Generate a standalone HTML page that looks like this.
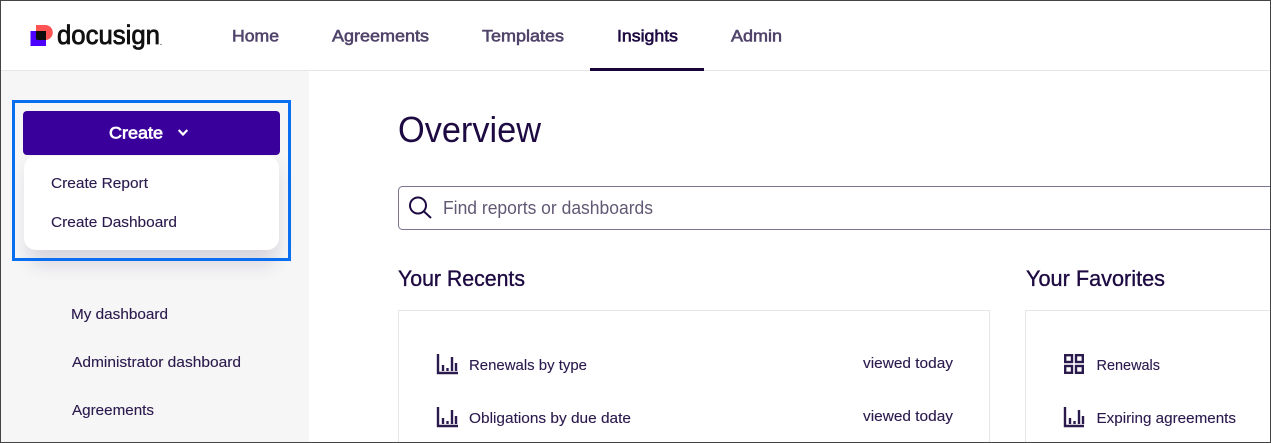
<!DOCTYPE html>
<html><head><meta charset="utf-8"><style>
html,body{margin:0;padding:0;background:#fff;overflow:hidden}
#p{position:relative;width:1271px;height:443px;overflow:hidden;background:#fff}
svg{position:absolute;left:0;top:0;display:block}
text{font-family:"Liberation Sans",sans-serif}
.n{font-size:17px;fill:#51446b;stroke:#51446b;stroke-width:.6}
.b{font-size:15px;fill:#2b1a4d;stroke:#2b1a4d;stroke-width:.12}
.h{font-size:22px;fill:#1e0a42;stroke:#1e0a42;stroke-width:.35}
</style></head><body><div id="p">
<svg width="1271" height="443" viewBox="0 0 1271 443" xmlns="http://www.w3.org/2000/svg">
<defs><filter id="s" x="-20%" y="-30%" width="140%" height="170%"><feGaussianBlur stdDeviation="9"/></filter></defs>
<rect x="1" y="71" width="308" height="372" fill="#f6f6f6"/>
<rect x="1" y="70" width="1270" height="1" fill="#e6e6e6"/>
<path d="M36 25H44.500A7.500 7.500 0 0 1 46 40V31H36Z" fill="#ff5252"/>
<rect x="30.500" y="31" width="15.500" height="15" fill="#4c00ff"/>
<path d="M36 31H46V40H38A2 2 0 0 1 36 38Z" fill="#0c0c0c"/>
<text x="57" y="44" font-size="27" textLength="103" lengthAdjust="spacingAndGlyphs" fill="#111" stroke="#111" stroke-width=".8">docusign</text>
<rect x="160" y="44" width="2" height="1" fill="#999"/>
<text class="n" x="232" y="41.500" textLength="47" lengthAdjust="spacingAndGlyphs">Home</text>
<text class="n" x="332" y="41.500" textLength="97" lengthAdjust="spacingAndGlyphs">Agreements</text>
<text class="n" x="482" y="41.500" textLength="82" lengthAdjust="spacingAndGlyphs">Templates</text>
<text class="n" x="617" y="41.500" textLength="61" lengthAdjust="spacingAndGlyphs" style="fill:#1e0a42;stroke:#1e0a42">Insights</text>
<text class="n" x="731" y="41.500" textLength="51" lengthAdjust="spacingAndGlyphs">Admin</text>
<rect x="590" y="68" width="114" height="3" fill="#170438"/>
<rect x="28" y="165" width="250" height="100" rx="12" fill="#1e0a42" opacity=".13" filter="url(#s)"/>
<rect x="13.500" y="101.500" width="276" height="158" fill="none" stroke="#0a6ef0" stroke-width="3"/>
<rect x="23" y="111" width="257" height="44" rx="4" fill="#3a009b"/>
<text x="109" y="138.500" font-size="17" fill="#fff" stroke="#fff" stroke-width=".7" textLength="54" lengthAdjust="spacingAndGlyphs">Create</text>
<path d="M178.700 130L183 134.500L187.300 130" fill="none" stroke="#fff" stroke-width="2.200"/>
<rect x="24" y="156" width="255" height="94" rx="12" fill="#fff"/>
<text class="b" x="51" y="188" textLength="97" lengthAdjust="spacingAndGlyphs">Create Report</text>
<text class="b" x="51" y="227" textLength="126" lengthAdjust="spacingAndGlyphs">Create Dashboard</text>
<text class="b" x="71" y="319" textLength="97" lengthAdjust="spacingAndGlyphs">My dashboard</text>
<text class="b" x="72" y="367" textLength="169" lengthAdjust="spacingAndGlyphs">Administrator dashboard</text>
<text class="b" x="72" y="415" textLength="82" lengthAdjust="spacingAndGlyphs">Agreements</text>
<text x="398" y="142" font-size="36" textLength="143" lengthAdjust="spacingAndGlyphs" fill="#1e0a42">Overview</text>
<path d="M1270 186.500H402.500A4 4 0 0 0 398.500 190.500V225.500A4 4 0 0 0 402.500 229.500H1270" fill="none" stroke="#7d7290"/>
<circle cx="418" cy="205.500" r="8" fill="none" stroke="#1e0a42" stroke-width="2"/>
<path d="M424 211.500L431 218" stroke="#1e0a42" stroke-width="2" fill="none"/>
<text x="443" y="214" font-size="18" textLength="210" lengthAdjust="spacingAndGlyphs" fill="#625874">Find reports or dashboards</text>
<text class="h" x="398" y="286" textLength="127" lengthAdjust="spacingAndGlyphs">Your Recents</text>
<text class="h" x="1026" y="286" textLength="139" lengthAdjust="spacingAndGlyphs">Your Favorites</text>
<path d="M398.500 443V310.500H989.500V443" fill="none" stroke="#e6e6e6"/>
<path d="M1025.500 443V310.500H1270" fill="none" stroke="#e6e6e6"/>
<g fill="none" stroke="#2b1a4d" stroke-width="2.400">
<path d="M438 354V373H458"/>
<path d="M443 365V371M447.500 368V371M452 357V371M456 363V371"/>
<path d="M438 407V426H458"/>
<path d="M443 418V424M447.500 421V424M452 410V424M456 416V424"/>
<path d="M1065 407V426H1084"/>
<path d="M1070 418V424M1074.500 421V424M1079 410V424M1083 416V424"/>
<rect x="1065.200" y="355.200" width="6.800" height="6.800"/><rect x="1076" y="355.200" width="6.800" height="6.800"/>
<rect x="1065.200" y="366" width="6.800" height="6.800"/><rect x="1076" y="366" width="6.800" height="6.800"/>
</g>
<text class="b" x="469" y="370" textLength="118" lengthAdjust="spacingAndGlyphs">Renewals by type</text>
<text class="b" x="469" y="423" textLength="162" lengthAdjust="spacingAndGlyphs">Obligations by due date</text>
<text class="b" x="863" y="368" textLength="90" lengthAdjust="spacingAndGlyphs">viewed today</text>
<text class="b" x="863" y="421" textLength="90" lengthAdjust="spacingAndGlyphs">viewed today</text>
<text class="b" x="1096.500" y="370" textLength="63.500" lengthAdjust="spacingAndGlyphs">Renewals</text>
<text class="b" x="1096.500" y="423" textLength="139.500" lengthAdjust="spacingAndGlyphs">Expiring agreements</text>
<rect x=".5" y=".5" width="1270" height="442" fill="none" stroke="#444"/>
</svg>
</div></body></html>
